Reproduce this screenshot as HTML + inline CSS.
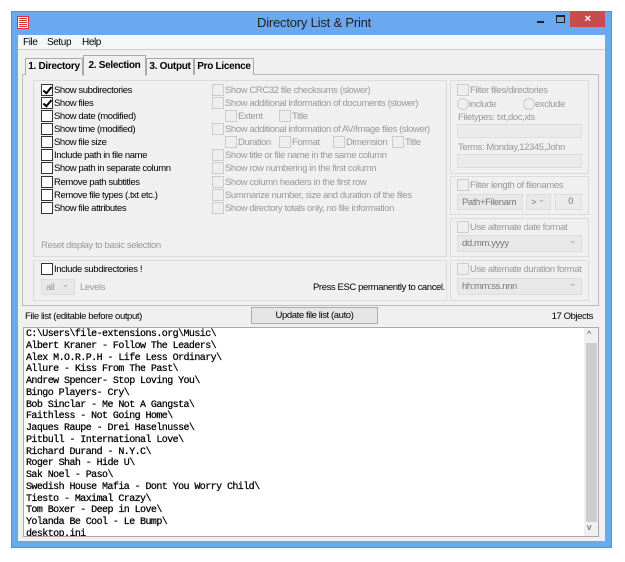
<!DOCTYPE html>
<html><head><meta charset="utf-8"><style>
*{box-sizing:border-box;margin:0;padding:0}
body{width:625px;height:562px;background:#fff;position:relative;overflow:hidden;font-family:"Liberation Sans",sans-serif;font-size:9.5px;letter-spacing:-0.4px;color:#000}
.a{position:absolute}
.win{left:11px;top:11px;width:601px;height:537px;background:#6aa8f0;border:1px solid #5a8fd0}
.cb{position:absolute;width:12px;height:12px;border:1px solid #333;background:#fff}
.cb.d{border-color:#ccc;background:#eee}
.cb.k::after{content:"";position:absolute;left:3px;top:0px;width:3px;height:7px;border:solid #000;border-width:0 2px 2px 0;transform:rotate(40deg)}
.l{position:absolute;white-space:nowrap;font-size:9.5px;line-height:13px}
.g{color:#999}
.box{position:absolute;border:1px solid #dcdcdc}
.inp{position:absolute;border:1px solid #ddd;background:#ebebeb}
.sel{position:absolute;border:1px solid #ddd;background:#e8e8e8;color:#999;font-size:9.5px;line-height:15px;padding-left:4px;white-space:nowrap;overflow:hidden}
.sel::after{content:"⌄";position:absolute;right:5px;top:-3px;color:#aaa}
.tab{position:absolute;border:1px solid #aaa;border-bottom:none;background:#f0f0f0;font-weight:bold;font-size:10px;letter-spacing:-0.3px;text-align:center;line-height:16px;white-space:nowrap;overflow:hidden}
.rad{position:absolute;width:12px;height:12px;border-radius:50%;border:1px solid #ccc;background:#eee}
pre{font-family:"Liberation Mono",monospace;font-size:10px;letter-spacing:-0.57px;line-height:11.75px;color:#000;-webkit-text-stroke:0.25px #000}
</style></head><body>
<div class="a win"></div>
<div class="a" style="left:17px;top:16px;width:12px;height:13px;background:#fff;border:1px solid #d33"></div>
<div class="a" style="left:19px;top:18px;width:8px;height:9px;background:repeating-linear-gradient(#d33 0 1px,#fff 1px 2px)"></div>
<div class="a" style="left:257px;top:15px;font-size:13px;letter-spacing:-0.2px;color:#222">Directory List &amp; Print</div>
<div class="a" style="left:537px;top:21px;width:7px;height:2px;background:#222"></div>
<div class="a" style="left:556px;top:15px;width:9px;height:8px;border:1px solid #222;border-top-width:2px"></div>
<div class="a" style="left:570px;top:11px;width:35px;height:16px;background:#c74c4c;color:#fff;text-align:center;font-size:11px;line-height:16px;font-weight:bold">×</div>
<div class="a" style="left:18px;top:35px;width:587px;height:506px;background:#f0f0f0"></div>
<div class="a" style="left:18px;top:35px;width:587px;height:15px;background:#f5f6f7;border-bottom:1px solid #ccc"></div>
<div class="a" style="left:23px;top:37px;font-size:10px">File</div>
<div class="a" style="left:47px;top:37px;font-size:10px">Setup</div>
<div class="a" style="left:82px;top:37px;font-size:10px">Help</div>
<div class="a" style="left:22px;top:74px;width:577px;height:232px;border:1px solid #bbb;background:#f0f0f0"></div>
<div class="tab" style="left:25px;top:58px;width:58px;height:17px">1. Directory</div>
<div class="tab" style="left:146px;top:58px;width:48px;height:17px">3. Output</div>
<div class="tab" style="left:194px;top:58px;width:60px;height:17px">Pro Licence</div>
<div class="tab" style="left:83px;top:55px;width:63px;height:21px;background:#f0f0f0;line-height:20px">2. Selection</div>
<div class="box" style="left:33px;top:80px;width:414px;height:177px"></div>
<div class="cb k" style="left:41px;top:84px"></div><div class="l" style="left:54px;top:84px">Show subdirectories</div>
<div class="cb k" style="left:41px;top:97px"></div><div class="l" style="left:54px;top:97px">Show files</div>
<div class="cb" style="left:41px;top:110px"></div><div class="l" style="left:54px;top:110px">Show date (modified)</div>
<div class="cb" style="left:41px;top:123px"></div><div class="l" style="left:54px;top:123px">Show time (modified)</div>
<div class="cb" style="left:41px;top:136px"></div><div class="l" style="left:54px;top:136px">Show file size</div>
<div class="cb" style="left:41px;top:149px"></div><div class="l" style="left:54px;top:149px">Include path in file name</div>
<div class="cb" style="left:41px;top:162px"></div><div class="l" style="left:54px;top:162px">Show path in separate column</div>
<div class="cb" style="left:41px;top:176px"></div><div class="l" style="left:54px;top:176px">Remove path subtitles</div>
<div class="cb" style="left:41px;top:189px"></div><div class="l" style="left:54px;top:189px">Remove file types (.txt etc.)</div>
<div class="cb" style="left:41px;top:202px"></div><div class="l" style="left:54px;top:202px">Show file attributes</div>
<div class="l g" style="left:41px;top:239px">Reset display to basic selection</div>
<div class="cb d" style="left:212px;top:84px"></div><div class="l g" style="left:225px;top:84px">Show CRC32 file checksums (slower)</div>
<div class="cb d" style="left:212px;top:97px"></div><div class="l g" style="left:225px;top:97px">Show additional information of documents (slower)</div>
<div class="cb d" style="left:225px;top:110px"></div><div class="l g" style="left:238px;top:110px">Extent</div>
<div class="cb d" style="left:279px;top:110px"></div><div class="l g" style="left:292px;top:110px">Title</div>
<div class="cb d" style="left:212px;top:123px"></div><div class="l g" style="left:225px;top:123px">Show additional information of AV/Image files (slower)</div>
<div class="cb d" style="left:225px;top:136px"></div><div class="l g" style="left:238px;top:136px">Duration</div>
<div class="cb d" style="left:279px;top:136px"></div><div class="l g" style="left:292px;top:136px">Format</div>
<div class="cb d" style="left:333px;top:136px"></div><div class="l g" style="left:346px;top:136px">Dimension</div>
<div class="cb d" style="left:392px;top:136px"></div><div class="l g" style="left:405px;top:136px">Title</div>
<div class="cb d" style="left:212px;top:149px"></div><div class="l g" style="left:225px;top:149px">Show title or file name in the same column</div>
<div class="cb d" style="left:212px;top:162px"></div><div class="l g" style="left:225px;top:162px">Show row numbering in the first column</div>
<div class="cb d" style="left:212px;top:176px"></div><div class="l g" style="left:225px;top:176px">Show column headers in the first row</div>
<div class="cb d" style="left:212px;top:189px"></div><div class="l g" style="left:225px;top:189px">Summarize number, size and duration of the files</div>
<div class="cb d" style="left:212px;top:202px"></div><div class="l g" style="left:225px;top:202px">Show directory totals only, no file information</div>
<div class="box" style="left:33px;top:260px;width:414px;height:41px"></div>
<div class="cb" style="left:41px;top:263px"></div><div class="l" style="left:54px;top:263px">Include subdirectories !</div>
<div class="sel" style="left:41px;top:279px;width:34px;height:16px">all</div>
<div class="l g" style="left:80px;top:281px">Levels</div>
<div class="l" style="left:313px;top:281px">Press ESC permanently to cancel.</div>
<div class="box" style="left:450px;top:80px;width:139px;height:94px"></div>
<div class="cb d" style="left:457px;top:84px"></div><div class="l g" style="left:470px;top:84px">Filter files/directories</div>
<div class="rad" style="left:457px;top:98px"></div><div class="l g" style="left:469px;top:98px">include</div>
<div class="rad" style="left:523px;top:98px"></div><div class="l g" style="left:535px;top:98px">exclude</div>
<div class="l g" style="left:458px;top:111px">Filetypes: txt,doc,xls</div>
<div class="inp" style="left:457px;top:124px;width:125px;height:14px"></div>
<div class="l g" style="left:458px;top:141px">Terms: Monday,12345,John</div>
<div class="inp" style="left:457px;top:154px;width:125px;height:14px"></div>
<div class="box" style="left:450px;top:176px;width:139px;height:39px"></div>
<div class="cb d" style="left:457px;top:179px"></div><div class="l g" style="left:470px;top:179px">Filter length of filenames</div>
<div class="sel" style="left:457px;top:194px;width:66px;height:16px;color:#777;padding-right:14px">Path+Filenam</div>
<div class="sel" style="left:526px;top:194px;width:25px;height:16px;color:#777">&gt;</div>
<div class="inp" style="left:555px;top:194px;width:27px;height:16px;text-align:right;padding-right:8px;color:#777;line-height:14px">0</div>
<div class="box" style="left:450px;top:218px;width:139px;height:39px"></div>
<div class="cb d" style="left:457px;top:221px"></div><div class="l g" style="left:470px;top:221px">Use alternate date format</div>
<div class="sel" style="left:457px;top:235px;width:125px;height:17px;color:#777">dd.mm.yyyy</div>
<div class="box" style="left:450px;top:260px;width:139px;height:41px"></div>
<div class="cb d" style="left:457px;top:263px"></div><div class="l g" style="left:470px;top:263px">Use alternate duration format</div>
<div class="sel" style="left:457px;top:278px;width:125px;height:17px;color:#777">hh:mm:ss.nnn</div>
<div class="l" style="left:25px;top:310px">File list (editable before output)</div>
<div class="a" style="left:251px;top:307px;width:127px;height:17px;border:1px solid #adadad;background:#e5e5e5;text-align:center;line-height:15px">Update file list (auto)</div>
<div class="l" style="right:32px;top:310px">17 Objects</div>
<div class="a" style="left:23px;top:327px;width:576px;height:210px;border:1px solid #aaa;background:#fff;overflow:hidden">
<pre style="position:absolute;left:2px;top:1px">C:\Users\file-extensions.org\Music\
Albert Kraner - Follow The Leaders\
Alex M.O.R.P.H - Life Less Ordinary\
Allure - Kiss From The Past\
Andrew Spencer- Stop Loving You\
Bingo Players- Cry\
Bob Sinclar - Me Not A Gangsta\
Faithless - Not Going Home\
Jaques Raupe - Drei Haselnusse\
Pitbull - International Love\
Richard Durand - N.Y.C\
Roger Shah - Hide U\
Sak Noel - Paso\
Swedish House Mafia - Dont You Worry Child\
Tiesto - Maximal Crazy\
Tom Boxer - Deep in Love\
Yolanda Be Cool - Le Bump\
desktop.ini</pre>
<div class="a" style="left:560px;top:0;width:15px;height:208px;background:#f0f0f0"></div>
<div class="a" style="left:562px;top:15px;width:11px;height:179px;background:#cdcdcd"></div>
<div class="a" style="left:563px;top:1px;font-size:9px;color:#555">^</div>
<div class="a" style="left:563px;top:194px;font-size:9px;color:#555">v</div>
</div>
</body></html>
